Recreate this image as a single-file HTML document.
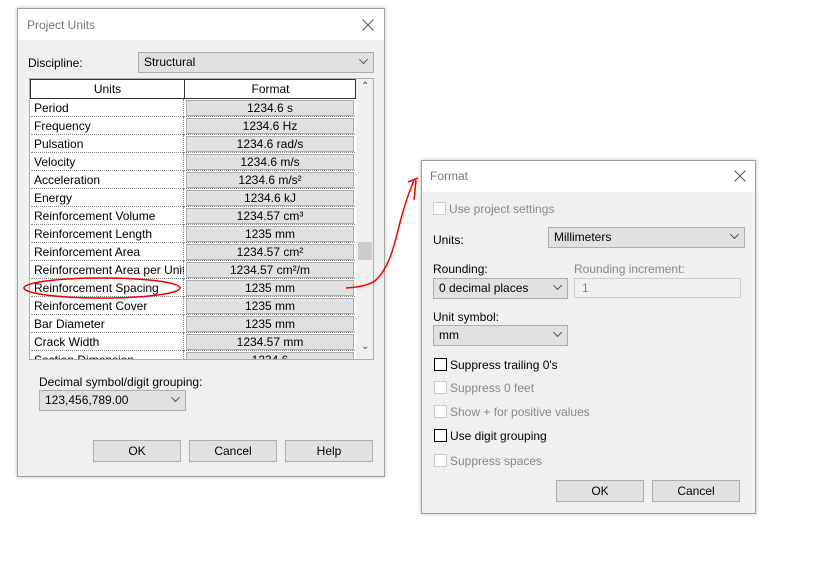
<!DOCTYPE html>
<html><head><style>
*{margin:0;padding:0;box-sizing:border-box}
body{width:839px;height:575px;background:#fff;position:relative;overflow:hidden;font-family:"Liberation Sans",sans-serif;font-size:12px;color:#000}
.a{position:absolute}
.dlg{background:#f0f0f0;border:1px solid #a0a0a0;box-shadow:0 0 4px rgba(0,0,0,.25)}
.tb{background:#fff;left:0;top:0;right:0;color:#777;font-size:12px}
.combo{background:#e1e1e1;border:1px solid #adadad;padding-left:5px;line-height:19px}
.combo .chev{position:absolute;right:6px;width:7px;height:7px;border-right:1px solid #444;border-bottom:1px solid #444;transform:rotate(45deg) scale(.9);top:3px}
.btn{background:#e1e1e1;border:1px solid #adadad;text-align:center;line-height:20px}
.row{position:absolute;left:0;height:18px;width:324px;border-bottom:1px dotted #888}
.row .u{position:absolute;left:3px;top:1px;width:150px;white-space:nowrap;overflow:hidden;line-height:16px}
.row .f{position:absolute;left:155px;top:1px;width:168px;height:16px;background:#e1e1e1;border:1px solid #adadad;text-align:center;line-height:14px}
.row .d{position:absolute;left:152px;top:0;height:18px;border-left:1px dotted #888}
.cb{width:13px;height:13px;border:1px solid #000;background:#fff}
.cb.g{border-color:#ccc}
.gray{color:#888}
</style></head><body>

<!-- Project Units -->
<div class="a dlg" style="left:17px;top:8px;width:368px;height:469px">
 <div class="a tb" style="height:31px;padding:9px 0 0 9px">Project Units</div>
 <svg class="a" style="right:10px;top:10px" width="12" height="12"><path d="M0.5 0.5L11.5 11.5M11.5 0.5L0.5 11.5" stroke="#555" stroke-width="1"/></svg>
 <div class="a" style="left:10px;top:47px">Discipline:</div>
 <div class="a combo" style="left:120px;top:43px;width:236px;height:21px">Structural<span class="chev"></span></div>
 <div class="a" style="left:11px;top:69px;width:345px;height:282px;background:#fff;border:1px solid #adadad;overflow:hidden">
  <div class="a" style="left:0;top:0;width:326px;height:20px;border:1px solid #333">
   <div class="a" style="left:0;top:0;width:154px;height:18px;text-align:center;line-height:18px;border-right:1px solid #333">Units</div>
   <div class="a" style="left:155px;top:0;width:169px;height:18px;text-align:center;line-height:18px">Format</div>
  </div>
  <div class="a" style="left:326px;top:0;width:18px;height:282px;background:#f0f0f0">
   <div class="a" style="left:5px;top:2px;font-size:10px;color:#444">⌃</div>
   <div class="a" style="left:2px;top:163px;width:14px;height:18px;background:#cdcdcd"></div>
   <div class="a" style="left:5px;top:262px;font-size:10px;color:#444">⌄</div>
  </div>
  <div class="a" style="left:1px;top:20px;width:325px;height:262px">
   <div class="row" style="top:0"><div class="u">Period</div><div class="d"></div><div class="f">1234.6 s</div></div>
   <div class="row" style="top:18px"><div class="u">Frequency</div><div class="d"></div><div class="f">1234.6 Hz</div></div>
   <div class="row" style="top:36px"><div class="u">Pulsation</div><div class="d"></div><div class="f">1234.6 rad/s</div></div>
   <div class="row" style="top:54px"><div class="u">Velocity</div><div class="d"></div><div class="f">1234.6 m/s</div></div>
   <div class="row" style="top:72px"><div class="u">Acceleration</div><div class="d"></div><div class="f">1234.6 m/s²</div></div>
   <div class="row" style="top:90px"><div class="u">Energy</div><div class="d"></div><div class="f">1234.6 kJ</div></div>
   <div class="row" style="top:108px"><div class="u">Reinforcement Volume</div><div class="d"></div><div class="f">1234.57 cm³</div></div>
   <div class="row" style="top:126px"><div class="u">Reinforcement Length</div><div class="d"></div><div class="f">1235 mm</div></div>
   <div class="row" style="top:144px"><div class="u">Reinforcement Area</div><div class="d"></div><div class="f">1234.57 cm²</div></div>
   <div class="row" style="top:162px"><div class="u">Reinforcement Area per Unit</div><div class="d"></div><div class="f">1234.57 cm²/m</div></div>
   <div class="row" style="top:180px"><div class="u">Reinforcement Spacing</div><div class="d"></div><div class="f">1235 mm</div></div>
   <div class="row" style="top:198px"><div class="u">Reinforcement Cover</div><div class="d"></div><div class="f">1235 mm</div></div>
   <div class="row" style="top:216px"><div class="u">Bar Diameter</div><div class="d"></div><div class="f">1235 mm</div></div>
   <div class="row" style="top:234px"><div class="u">Crack Width</div><div class="d"></div><div class="f">1234.57 mm</div></div>
   <div class="row" style="top:252px"><div class="u">Section Dimension</div><div class="d"></div><div class="f">1234.6</div></div>
  </div>
 </div>
 <div class="a" style="left:21px;top:366px">Decimal symbol/digit grouping:</div>
 <div class="a combo" style="left:21px;top:381px;width:147px;height:21px">123,456,789.00<span class="chev"></span></div>
 <div class="a btn" style="left:75px;top:431px;width:88px;height:22px">OK</div>
 <div class="a btn" style="left:171px;top:431px;width:88px;height:22px">Cancel</div>
 <div class="a btn" style="left:267px;top:431px;width:88px;height:22px">Help</div>
</div>

<!-- Format -->
<div class="a dlg" style="left:421px;top:160px;width:335px;height:354px">
 <div class="a tb" style="height:31px;padding:8px 0 0 8px">Format</div>
 <svg class="a" style="right:9px;top:9px" width="12" height="12"><path d="M0.5 0.5L11.5 11.5M11.5 0.5L0.5 11.5" stroke="#555" stroke-width="1"/></svg>
 <div class="a cb g" style="left:11px;top:41px"></div>
 <div class="a gray" style="left:27px;top:41px">Use project settings</div>
 <div class="a" style="left:11px;top:72px">Units:</div>
 <div class="a combo" style="left:126px;top:66px;width:197px;height:21px">Millimeters<span class="chev"></span></div>
 <div class="a" style="left:11px;top:101px">Rounding:</div>
 <div class="a gray" style="left:152px;top:101px">Rounding increment:</div>
 <div class="a combo" style="left:11px;top:117px;width:135px;height:21px">0 decimal places<span class="chev"></span></div>
 <div class="a gray" style="left:152px;top:117px;width:167px;height:20px;border:1px solid #ccc;padding-left:7px;line-height:18px">1</div>
 <div class="a" style="left:11px;top:149px">Unit symbol:</div>
 <div class="a combo" style="left:11px;top:164px;width:135px;height:21px">mm<span class="chev"></span></div>
 <div class="a cb" style="left:12px;top:197px"></div><div class="a" style="left:28px;top:197px">Suppress trailing 0's</div>
 <div class="a cb g" style="left:12px;top:220px"></div><div class="a gray" style="left:28px;top:220px">Suppress 0 feet</div>
 <div class="a cb g" style="left:12px;top:244px"></div><div class="a gray" style="left:28px;top:244px">Show + for positive values</div>
 <div class="a cb" style="left:12px;top:268px"></div><div class="a" style="left:28px;top:268px">Use digit grouping</div>
 <div class="a cb g" style="left:12px;top:293px"></div><div class="a gray" style="left:28px;top:293px">Suppress spaces</div>
 <div class="a btn" style="left:134px;top:319px;width:88px;height:22px">OK</div>
 <div class="a btn" style="left:230px;top:319px;width:88px;height:22px">Cancel</div>
</div>

<svg class="a" style="left:0;top:0" width="839" height="575">
 <ellipse cx="102" cy="288" rx="78" ry="10" fill="none" stroke="#e00" stroke-width="1.5"/>
 <path d="M346 288 C360 287 372 285 378 278 C392 262 395 240 402 215 C406 200 410 190 414 180" fill="none" stroke="#f00" stroke-width="1.5"/>
 <path d="M408 182 L418 178 M416 180 L414 200" fill="none" stroke="#f00" stroke-width="1.5"/>
</svg>
</body></html>
